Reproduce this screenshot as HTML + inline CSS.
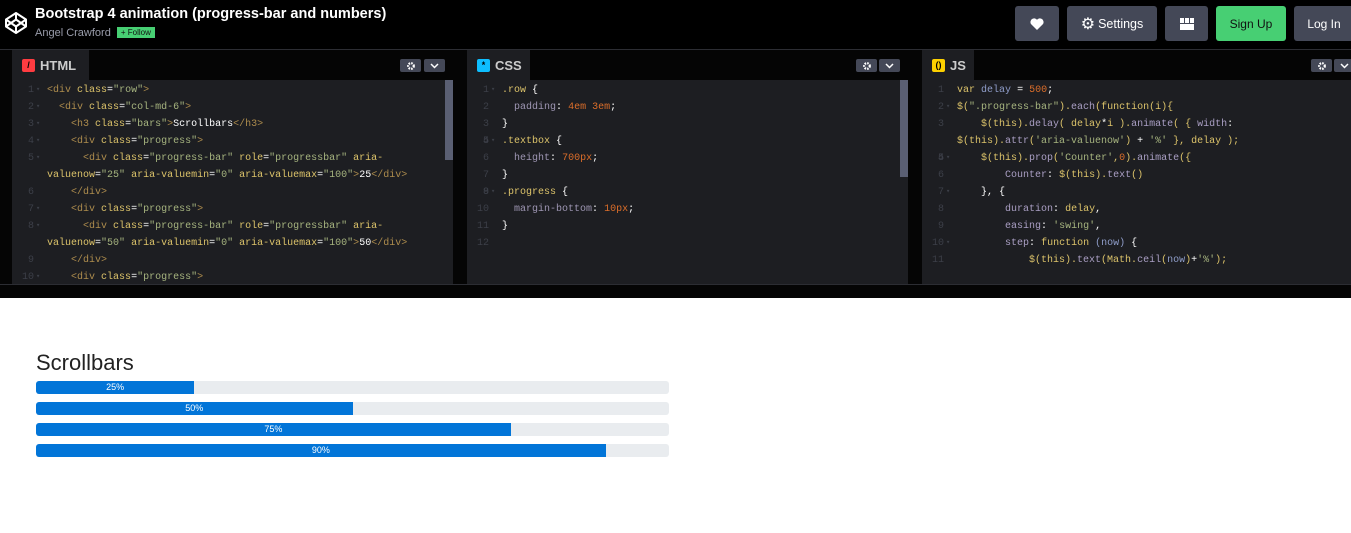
<!DOCTYPE html>
<html><head><meta charset="utf-8"><style>
*{margin:0;padding:0;box-sizing:border-box}
body{width:1351px;height:533px;background:#fff;font-family:"Liberation Sans",sans-serif;overflow:hidden;position:relative}
.top{position:absolute;left:0;top:0;width:1351px;height:50px;background:#000;border-bottom:1px solid #2c2d33}
.title{position:absolute;left:35px;top:6px;color:#fff;font-weight:bold;font-size:14.5px}
.auth{position:absolute;left:35px;top:27px;color:#9a9dab;font-size:11px}
.follow{display:inline-block;background:#47cf73;color:#111;font-size:8px;padding:1px 4px;margin-left:3px;vertical-align:1px}
.btn{position:absolute;top:6px;height:35px;background:#444857;border-radius:3px;color:#fff;font-size:12px;display:flex;align-items:center;justify-content:center}
.editors{position:absolute;left:0;top:50px;width:1351px;height:234px;background:#050505}
.strip{position:absolute;left:0;top:284px;width:1351px;height:14px;background:#050505;border-top:1px solid #2c2d33}
.panel{position:absolute;top:0;height:234px}
.tab{position:absolute;left:0;top:0;height:30px;background:#1d1e22;color:#ccc;font-size:13px;font-weight:bold;padding:8px 0 0 10px;line-height:15px}
.tab i{display:inline-block;width:13px;height:13px;border-radius:2px;vertical-align:top;margin:1px 5px 0 0;font-style:normal;font-size:9px;color:#000;text-align:center;line-height:13px}
.ctl{position:absolute;top:9px;height:13px;width:21px;background:#444857;border-radius:2px;display:flex;align-items:center;justify-content:center}
.code{position:absolute;left:0;top:30px;right:0;bottom:0;background:#1d1e22;overflow:hidden;font-family:"Liberation Mono","DejaVu Sans Mono",monospace;font-size:10px;line-height:17px;padding-top:2px;color:#ddd}
.ln{position:absolute;left:0;width:22px;text-align:right;color:#3c3f48}
.ar{position:absolute;left:24px;color:#3c3f48;font-size:7px}
.l{position:relative;padding-left:35px;white-space:pre}
.sb{position:absolute;right:0;top:30px;width:8px;height:80px;background:#5a5f73}
.t{color:#ad8c4d}.a{color:#dcc36a}.s{color:#a6b47f}.w{color:#fff}.p{color:#9e96b3}.n{color:#dc6e2a}.k{color:#dcc36a}.v{color:#8f9dc9}.m{color:#aa9fc4}
h3{position:absolute;left:36px;top:350px;font-size:22px;font-weight:normal;color:#222}
.pg{position:absolute;left:36px;width:633px;height:13px;background:#e9ecef;border-radius:3px;overflow:hidden}
.pb{height:13px;background:#0275d8;color:#fff;font-size:9px;text-align:center;line-height:13px}
</style></head><body>
<div class="top">
<svg style="position:absolute;left:4px;top:11px" width="24" height="24" viewBox="0 0 24 24" fill="none" stroke="#fff" stroke-width="2" stroke-linejoin="round"><path d="M12 2L22 8.5V15.5L12 22L2 15.5V8.5Z"/><path d="M12 2V8.5M12 15.5V22M2 8.5L12 15.5L22 8.5M2 15.5L12 8.5L22 15.5"/></svg>
<div class="title">Bootstrap 4 animation (progress-bar and numbers)</div>
<div class="auth">Angel Crawford <span class="follow">+ Follow</span></div>
<div class="btn" style="left:1015px;width:44px"><svg width="14" height="12" viewBox="0 0 14 12"><path d="M7 12L1.2 6.3A3.4 3.4 0 0 1 7 1.8A3.4 3.4 0 0 1 12.8 6.3Z" fill="#fff"/></svg></div>
<div class="btn" style="left:1067px;width:90px;font-size:12.5px"><span style="font-size:16px;margin-right:3px">&#9881;</span>Settings</div>
<div class="btn" style="left:1165px;width:43px"><svg width="14" height="12"><rect x="0" y="0" width="4" height="5" fill="#fff"/><rect x="5" y="0" width="4" height="5" fill="#fff"/><rect x="10" y="0" width="4" height="5" fill="#fff"/><rect x="0" y="6" width="14" height="6" fill="#fff"/></svg></div>
<div class="btn" style="left:1216px;width:70px;background:#47cf73;color:#111">Sign Up</div>
<div class="btn" style="left:1294px;width:60px">Log In</div>
</div>
<div class="editors">
<div class="panel" style="left:12px;width:441px">
<div class="tab" style="width:77px"><i style="background:#ff3c41;color:#000">/</i>HTML</div>
<div class="ctl" style="left:388px"><svg width="8" height="8"><circle cx="4" cy="4" r="2.8" fill="none" stroke="#fff" stroke-width="2.2" stroke-dasharray="1.6 1"/></svg></div><div class="ctl" style="left:412px"><svg width="9" height="6"><path d="M1 1L4.5 4.5L8 1" stroke="#fff" stroke-width="1.5" fill="none"/></svg></div>
<div class="code">
<div class="l"><span class="ln">1</span><span class="ar">▾</span><span class="t">&lt;div</span> <span class="a">class</span><span class="w">=</span><span class="s">"row"</span><span class="t">&gt;</span></div>
<div class="l"><span class="ln">2</span><span class="ar">▾</span>  <span class="t">&lt;div</span> <span class="a">class</span><span class="w">=</span><span class="s">"col-md-6"</span><span class="t">&gt;</span></div>
<div class="l"><span class="ln">3</span><span class="ar">▾</span>    <span class="t">&lt;h3</span> <span class="a">class</span><span class="w">=</span><span class="s">"bars"</span><span class="t">&gt;</span><span class="w">Scrollbars</span><span class="t">&lt;/h3&gt;</span></div>
<div class="l"><span class="ln">4</span><span class="ar">▾</span>    <span class="t">&lt;div</span> <span class="a">class</span><span class="w">=</span><span class="s">"progress"</span><span class="t">&gt;</span></div>
<div class="l"><span class="ln">5</span><span class="ar">▾</span>      <span class="t">&lt;div</span> <span class="a">class</span><span class="w">=</span><span class="s">"progress-bar"</span> <span class="a">role</span><span class="w">=</span><span class="s">"progressbar"</span> <span class="a">aria-</span></div>
<div class="l"><span class="a">valuenow</span><span class="w">=</span><span class="s">"25"</span> <span class="a">aria-valuemin</span><span class="w">=</span><span class="s">"0"</span> <span class="a">aria-valuemax</span><span class="w">=</span><span class="s">"100"</span><span class="t">&gt;</span><span class="w">25</span><span class="t">&lt;/div&gt;</span></div>
<div class="l"><span class="ln">6</span>    <span class="t">&lt;/div&gt;</span></div>
<div class="l"><span class="ln">7</span><span class="ar">▾</span>    <span class="t">&lt;div</span> <span class="a">class</span><span class="w">=</span><span class="s">"progress"</span><span class="t">&gt;</span></div>
<div class="l"><span class="ln">8</span><span class="ar">▾</span>      <span class="t">&lt;div</span> <span class="a">class</span><span class="w">=</span><span class="s">"progress-bar"</span> <span class="a">role</span><span class="w">=</span><span class="s">"progressbar"</span> <span class="a">aria-</span></div>
<div class="l"><span class="a">valuenow</span><span class="w">=</span><span class="s">"50"</span> <span class="a">aria-valuemin</span><span class="w">=</span><span class="s">"0"</span> <span class="a">aria-valuemax</span><span class="w">=</span><span class="s">"100"</span><span class="t">&gt;</span><span class="w">50</span><span class="t">&lt;/div&gt;</span></div>
<div class="l"><span class="ln">9</span>    <span class="t">&lt;/div&gt;</span></div>
<div class="l"><span class="ln">10</span><span class="ar">▾</span>    <span class="t">&lt;div</span> <span class="a">class</span><span class="w">=</span><span class="s">"progress"</span><span class="t">&gt;</span></div>
</div><div class="sb"></div>
</div>
<div class="panel" style="left:467px;width:441px">
<div class="tab" style="width:63px"><i style="background:#0ebeff">*</i>CSS</div>
<div class="ctl" style="left:389px"><svg width="8" height="8"><circle cx="4" cy="4" r="2.8" fill="none" stroke="#fff" stroke-width="2.2" stroke-dasharray="1.6 1"/></svg></div><div class="ctl" style="left:412px"><svg width="9" height="6"><path d="M1 1L4.5 4.5L8 1" stroke="#fff" stroke-width="1.5" fill="none"/></svg></div>
<div class="code">
<div class="l"><span class="ln">1</span><span class="ar">▾</span><span class="a">.row</span> <span class="w">{</span></div>
<div class="l"><span class="ln">2</span>  <span class="p">padding</span><span class="w">:</span> <span class="n">4em 3em</span><span class="w">;</span></div>
<div class="l"><span class="ln">3</span><span class="w">}</span></div>
<div class="l"><span class="ln">4</span></div>
<div class="l"><span class="ln">5</span><span class="ar">▾</span><span class="a">.textbox</span> <span class="w">{</span></div>
<div class="l"><span class="ln">6</span>  <span class="p">height</span><span class="w">:</span> <span class="n">700px</span><span class="w">;</span></div>
<div class="l"><span class="ln">7</span><span class="w">}</span></div>
<div class="l"><span class="ln">8</span></div>
<div class="l"><span class="ln">9</span><span class="ar">▾</span><span class="a">.progress</span> <span class="w">{</span></div>
<div class="l"><span class="ln">10</span>  <span class="p">margin-bottom</span><span class="w">:</span> <span class="n">10px</span><span class="w">;</span></div>
<div class="l"><span class="ln">11</span><span class="w">}</span></div>
<div class="l"><span class="ln">12</span></div>
</div><div class="sb" style="height:97px"></div>
</div>
<div class="panel" style="left:922px;width:429px">
<div class="tab" style="width:52px"><i style="background:#fcd000">()</i>JS</div>
<div class="ctl" style="left:389px"><svg width="8" height="8"><circle cx="4" cy="4" r="2.8" fill="none" stroke="#fff" stroke-width="2.2" stroke-dasharray="1.6 1"/></svg></div><div class="ctl" style="left:412px;width:20px"><svg width="9" height="6"><path d="M1 1L4.5 4.5L8 1" stroke="#fff" stroke-width="1.5" fill="none"/></svg></div>
<div class="code">
<div class="l"><span class="ln">1</span><span class="k">var</span> <span class="v">delay</span> <span class="w">=</span> <span class="n">500</span><span class="w">;</span></div>
<div class="l"><span class="ln">2</span><span class="ar">▾</span><span class="k">$(</span><span class="s">".progress-bar"</span><span class="k">).</span><span class="m">each</span><span class="k">(function(i){</span></div>
<div class="l"><span class="ln">3</span>    <span class="k">$(this).</span><span class="m">delay</span><span class="k">( delay</span><span class="w">*</span><span class="k">i ).</span><span class="m">animate</span><span class="k">( { </span><span class="m">width</span><span class="w">:</span></div>
<div class="l"><span class="k">$(this).</span><span class="m">attr</span><span class="k">(</span><span class="s">'aria-valuenow'</span><span class="k">)</span> <span class="w">+</span> <span class="s">'%'</span> <span class="k">}, delay );</span></div>
<div class="l"><span class="ln">4</span></div>
<div class="l"><span class="ln">5</span><span class="ar">▾</span>    <span class="k">$(this).</span><span class="m">prop</span><span class="k">(</span><span class="s">'Counter'</span><span class="k">,</span><span class="n">0</span><span class="k">).</span><span class="m">animate</span><span class="k">({</span></div>
<div class="l"><span class="ln">6</span>        <span class="m">Counter</span><span class="w">:</span> <span class="k">$(this).</span><span class="m">text</span><span class="k">()</span></div>
<div class="l"><span class="ln">7</span><span class="ar">▾</span>    <span class="w">}, {</span></div>
<div class="l"><span class="ln">8</span>        <span class="m">duration</span><span class="w">:</span> <span class="k">delay</span><span class="w">,</span></div>
<div class="l"><span class="ln">9</span>        <span class="m">easing</span><span class="w">:</span> <span class="s">'swing'</span><span class="w">,</span></div>
<div class="l"><span class="ln">10</span><span class="ar">▾</span>        <span class="m">step</span><span class="w">:</span> <span class="k">function</span> <span class="v">(now)</span> <span class="w">{</span></div>
<div class="l"><span class="ln">11</span>            <span class="k">$(this).</span><span class="m">text</span><span class="k">(Math.</span><span class="m">ceil</span><span class="k">(</span><span class="v">now</span><span class="k">)</span><span class="w">+</span><span class="s">'%'</span><span class="k">);</span></div>
</div>
</div>
</div>
<div class="strip"></div>
<h3>Scrollbars</h3>
<div class="pg" style="top:381px"><div class="pb" style="width:25%">25%</div></div>
<div class="pg" style="top:402px"><div class="pb" style="width:50%">50%</div></div>
<div class="pg" style="top:423px"><div class="pb" style="width:75%">75%</div></div>
<div class="pg" style="top:444px"><div class="pb" style="width:90%">90%</div></div>
</body></html>
